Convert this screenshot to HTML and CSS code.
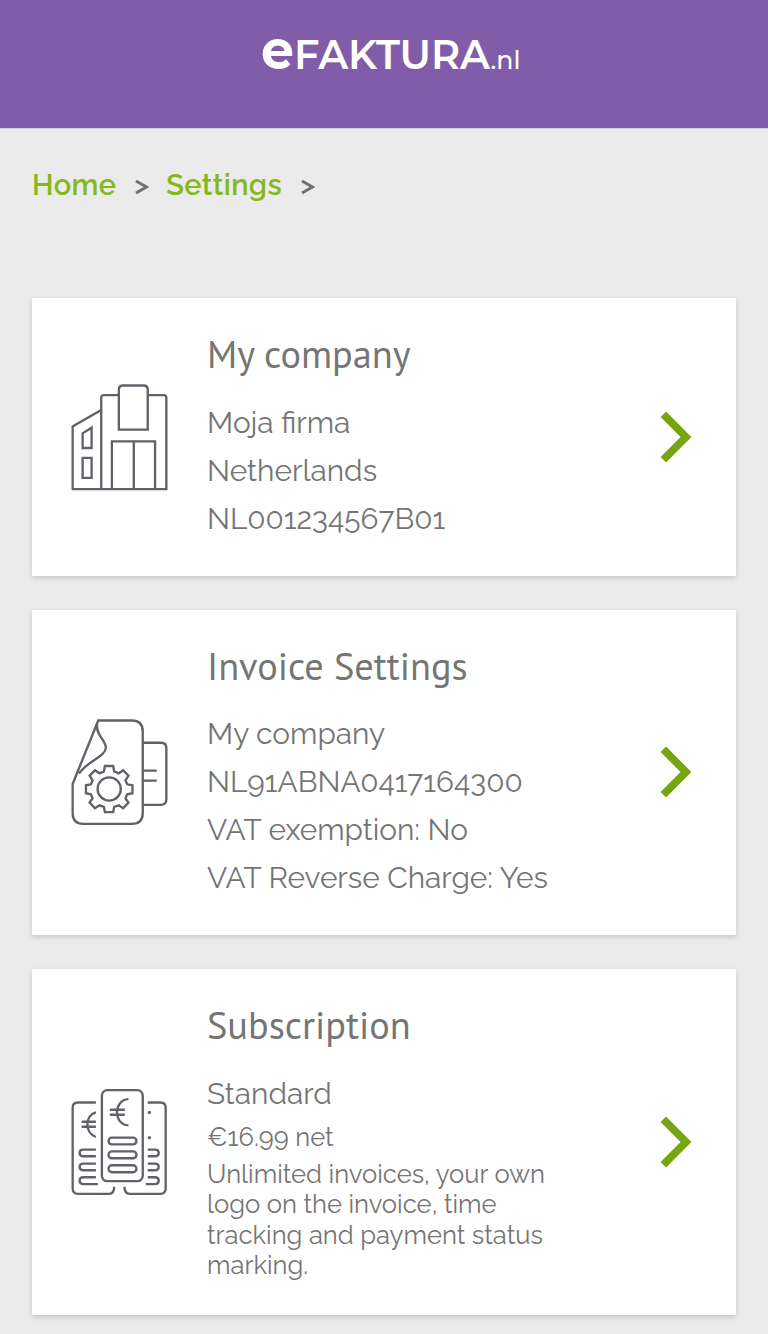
FILE: index.html
```html
<!DOCTYPE html>
<html lang="en">
<head>
  <meta charset="UTF-8">
  <meta name="viewport" content="width=device-width, initial-scale=1">
  <title>eFaktura.nl - Settings</title>
  <link rel="stylesheet" href="styles.css">
</head>

<body>
<header class="header">
  <svg class="logo" width="300" height="90" viewBox="0 0 300 90">
    <text class="logo-e" x="20" y="59" textLength="33" lengthAdjust="spacingAndGlyphs">e</text>
    <text class="logo-name" x="53" y="59" textLength="196" lengthAdjust="spacingAndGlyphs">FAKTURA</text>
    <text class="logo-tld" x="249.5" y="59" textLength="30" lengthAdjust="spacingAndGlyphs">.nl</text>
  </svg>
</header>

<nav class="breadcrumb">
  <a href="#">Home</a>
  <svg class="sep" width="14" height="16" viewBox="0 0 14 16"><path d="M1 2 L11.5 8 L1 14"/></svg>
  <a href="#">Settings</a>
  <svg class="sep" width="14" height="16" viewBox="0 0 14 16"><path d="M1 2 L11.5 8 L1 14"/></svg>
</nav>

<main class="cards">
  <a class="card" href="#">
    <svg class="icon" viewBox="30 38 298 324">
      <path d="M38 357 V168 L124 119 M124 357 V82 Q124 74 132 74 H177 M264 74 H312 Q320 74 320 82 V357 H35"/>
      <path d="M177 178 V58 Q177 45 190 45 H251 Q264 45 264 58 V178 Z"/>
      <path d="M156 357 V213 H286 V357 M222 213 V357"/>
      <path d="M68 233 V189 L95 172 V233 Z M68 263 H95 V323 H68 Z"/>
    </svg>
    <div class="info">
      <h2 class="title">My company</h2>
      <p class="row">Moja firma</p>
      <p class="row">Netherlands</p>
      <p class="row">NL001234567B01</p>
    </div>
    <svg class="arrow" viewBox="0 0 96 156"><path d="M10 10 L78 78 L10 146"/></svg>
  </a>

  <a class="card" href="#">
    <svg class="icon" viewBox="30 38 298 324">
      <path d="M115 45 H216 Q249 45 249 78 V324 Q249 356 216 356 H70 Q38 356 38 324 V236 Z"/>
      <path d="M112 55 C106 88 138 104 138 127 C136 155 84 165 57 205"/>
      <path d="M249 112 H304 Q320 112 320 128 V283 Q320 299 304 299 H249 M249 196 H291 M249 226 H291"/>
      <circle cx="148" cy="251" r="35"/>
      <path d="M135 182 H160 L163 198 L177 204 L190 195 L206 211 L197 225 L202 237 L218 240 V264 L202 267 L197 279 L206 292 L190 309 L177 300 L163 305 L160 321 H135 L132 305 L119 300 L105 309 L89 292 L98 279 L93 267 L78 264 V240 L93 237 L98 225 L89 211 L105 195 L119 204 L132 198 Z"/>
    </svg>
    <div class="info">
      <h2 class="title">Invoice Settings</h2>
      <p class="row">My company</p>
      <p class="row">NL91ABNA0417164300</p>
      <p class="row">VAT exemption: No</p>
      <p class="row">VAT Reverse Charge: Yes</p>
    </div>
    <svg class="arrow" viewBox="0 0 96 156"><path d="M10 10 L78 78 L10 146"/></svg>
  </a>

  <a class="card" href="#">
    <svg class="icon" viewBox="30 24 298 324">
      <rect x="126" y="30" width="123" height="274" rx="16"/>
      <path d="M108 67 H54 Q38 67 38 83 V326 Q38 342 54 342 H148 Q163 342 163 321"/>
      <path d="M264 67 H302 Q318 67 318 83 V326 Q318 342 302 342 H210 Q194 342 194 321"/>
      <rect x="146" y="173" width="84" height="20" rx="10"/>
      <rect x="146" y="214" width="84" height="21" rx="10"/>
      <rect x="146" y="256" width="84" height="21" rx="10"/>
      <path d="M108 209 H70 Q59 209 59 219 Q59 229 70 229 H108 M108 251 H70 Q59 251 59 261 Q59 271 70 271 H108 M108 292 H70 Q59 292 59 303 Q59 313 70 313 H114"/>
      <path d="M264 209 H286 Q297 209 297 219 Q297 229 286 229 H264 M264 251 H286 Q297 251 297 261 Q297 271 286 271 H264 M264 292 H286 Q297 292 297 303 Q297 313 286 313 H258"/>
      <path d="M206 57 C160 59 160 134 206 136 M150 89 H195 M150 104 H195"/>
      <path d="M108 97 C74 106 74 159 108 171 M65 125 H108 M65 140 H108"/>
      <circle class="dot" cx="269" cy="97" r="5"/>
      <circle class="dot" cx="269" cy="173" r="5"/>
    </svg>
    <div class="info">
      <h2 class="title">Subscription</h2>
      <p class="row">Standard</p>
      <p class="price">€16.99 net</p>
      <p class="desc">Unlimited invoices, your own<br>logo on the invoice, time<br>tracking and payment status<br>marking.</p>
    </div>
    <svg class="arrow" viewBox="0 0 96 156"><path d="M10 10 L78 78 L10 146"/></svg>
  </a>
</main>
</body>
</html>
```

FILE: styles.css
```css
* {
  margin: 0;
  padding: 0;
  box-sizing: border-box;
}

body {
  background: #ebebeb;
  color: #757575;
  font-family: Raleway, Lato, sans-serif;
}

a {
  color: inherit;
  text-decoration: none;
}

.header {
  background: #815da9;
  height: 129px;
  padding: 10px 0 0 241px;
  border-bottom: 1px solid #d9cfe4;
}

.logo {
  display: block;
  fill: #fff;
  font-family: Montserrat, Lato, sans-serif;
}

.logo-e {
  font-size: 54px;
  font-weight: 700;
}

.logo-name {
  font-size: 41px;
  font-weight: 600;
}

.logo-tld {
  font-size: 26px;
  font-weight: 500;
}

.breadcrumb {
  display: flex;
  align-items: center;
  height: 169.4px;
  padding: 0 32px 58px;
  color: #86b81b;
  font-size: 29px;
  font-weight: 600;
  letter-spacing: 0.35px;
}

.sep {
  margin: 4px 17px 0 19px;
  fill: none;
  stroke: #707070;
  stroke-width: 3;
}

.cards {
  display: flex;
  flex-direction: column;
  gap: 34px;
  padding: 0 32px 18px;
}

.card {
  display: flex;
  align-items: center;
  background: #fff;
  padding: 32px 44px 33px 38px;
  box-shadow: 0 2px 5px rgba(0, 0, 0, 0.16);
}

.icon {
  width: 99px;
  height: 108px;
  margin: 1px 38px 0 0;
  fill: none;
  stroke: #636068;
  stroke-width: 7;
}

.icon .dot {
  fill: #636068;
  stroke: none;
}

.info {
  flex: 1;
}

.title {
  margin-bottom: 20.4px;
  font-family: "PT Sans", "Noto Sans", sans-serif;
  font-size: 38.3px;
  font-weight: 400;
  line-height: 48px;
}

.row {
  font-size: 29.8px;
  line-height: 48px;
}

.price {
  font-size: 25.6px;
  line-height: 38px;
}

.desc {
  padding: 3px 0 1px;
  font-size: 25.6px;
  line-height: 30.6px;
}

.arrow {
  width: 32px;
  height: 52px;
  margin-top: 1px;
  fill: none;
  stroke: #76a60f;
  stroke-width: 23;
}
```
